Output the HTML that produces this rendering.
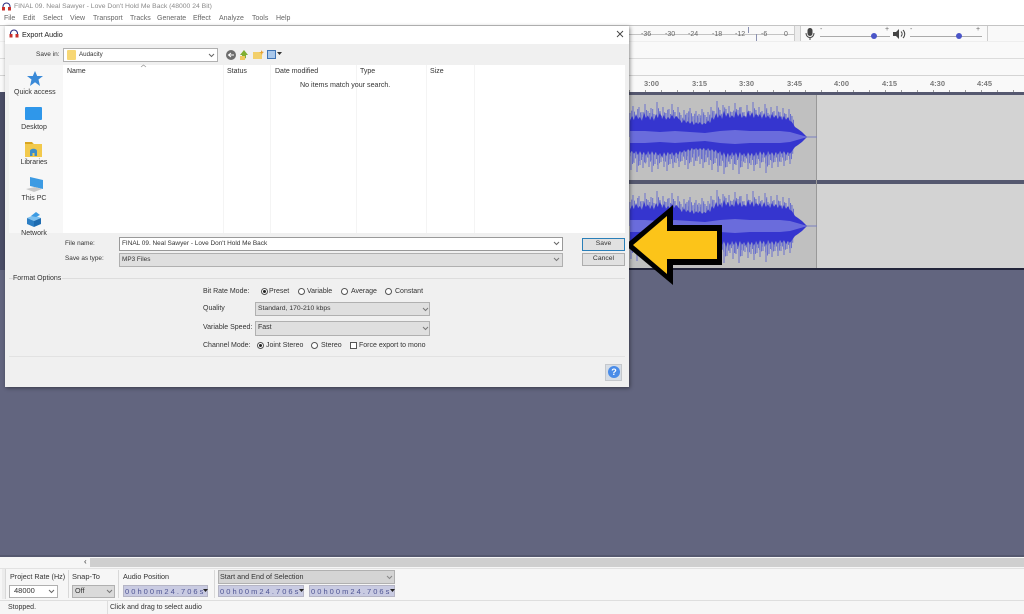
<!DOCTYPE html>
<html><head><meta charset="utf-8"><style>
html,body{margin:0;padding:0;background:#fff}
#r{position:relative;width:1024px;height:614px;overflow:hidden;background:#62657f;font-family:"Liberation Sans",sans-serif;font-size:7px;color:#333;filter:blur(.35px)}
#r div,#r svg{position:absolute}
.t{white-space:nowrap;line-height:10px}
.sel{border:1px solid #b0b0b0;box-sizing:border-box;background:#dfdfdf}
.tm{font-size:7.500px;letter-spacing:2.050px;background:#c9cbe2;color:#4f5594;height:12px;line-height:12px;white-space:nowrap;border:1px solid #b5b5c5;box-sizing:border-box;padding-left:1px}
.rad{width:7px;height:7px;border:1px solid #555;border-radius:50%;box-sizing:border-box;background:#fff}
.on:after{content:"";position:absolute;left:1px;top:1px;width:3px;height:3px;border-radius:50%;background:#222}
.rl{font-size:7.500px;color:#444;white-space:nowrap;line-height:10px;font-weight:bold;opacity:.7}
.db{font-size:7px;color:#666;white-space:nowrap;line-height:9px}
</style></head><body><div id="r">
<!-- title & menu -->
<div style="left:0;top:0;width:1024px;height:25px;background:#fff"></div>
<svg style="left:2px;top:2px" width="9" height="9" viewBox="0 0 9 9"><path d="M1 6V4.500a3.500 3.500 0 0 1 7 0V6" fill="none" stroke="#2b2b80" stroke-width="1"/><rect x="0" y="5" width="3" height="3.500" fill="#c9302c"/><rect x="6" y="5" width="3" height="3.500" fill="#c9302c"/></svg>
<div class="t" style="left:14px;top:2px;color:#8a8a8a;font-size:6.800px">FINAL 09. Neal Sawyer - Love Don't Hold Me Back (48000 24 Bit)</div>
<div class="t" style="left:4px;top:14px;color:#666">File</div>
<div class="t" style="left:23px;top:14px;color:#666">Edit</div>
<div class="t" style="left:43px;top:14px;color:#666">Select</div>
<div class="t" style="left:70px;top:14px;color:#666">View</div>
<div class="t" style="left:93px;top:14px;color:#666">Transport</div>
<div class="t" style="left:130px;top:14px;color:#666">Tracks</div>
<div class="t" style="left:157px;top:14px;color:#666">Generate</div>
<div class="t" style="left:193px;top:14px;color:#666">Effect</div>
<div class="t" style="left:219px;top:14px;color:#666">Analyze</div>
<div class="t" style="left:252px;top:14px;color:#666">Tools</div>
<div class="t" style="left:276px;top:14px;color:#666">Help</div>
<!-- toolbars -->
<div style="left:0;top:25px;width:1024px;height:67px;background:#f9f9f9"></div>
<div style="left:0;top:25px;width:1024px;height:1px;background:#c4c4c4"></div>
<div style="left:0;top:41px;width:1024px;height:1px;background:#eeeeee"></div>
<div style="left:0;top:58px;width:1024px;height:1px;background:#dcdcdc"></div>
<div style="left:0;top:75px;width:1024px;height:1px;background:#d4d4d4"></div>
<!-- meter -->
<div style="left:629px;top:34px;width:170px;height:1px;background:#c4c4c4"></div>
<div class="db" style="left:641px;top:30px">-36</div><div class="db" style="left:665px;top:30px">-30</div><div class="db" style="left:688px;top:30px">-24</div><div class="db" style="left:712px;top:30px">-18</div><div class="db" style="left:735px;top:30px">-12</div><div class="db" style="left:761px;top:30px">-6</div><div class="db" style="left:784px;top:30px">0</div>
<div style="left:748px;top:27px;width:1px;height:6px;background:#8a90b0"></div>
<div style="left:756px;top:34px;width:1px;height:7px;background:#8a90b0"></div>
<div style="left:794px;top:26px;width:7px;height:15px;background:#ececec;border-left:1px solid #ccc;border-right:1px solid #ccc;box-sizing:border-box"></div>
<svg style="left:803px;top:27px" width="14" height="14" viewBox="0 0 14 14"><rect x="4.500" y="1" width="5" height="8" rx="2.500" fill="#444"/><path d="M3 6c0 6 8 6 8 0M7 10v3" fill="none" stroke="#444"/></svg>
<div style="left:820px;top:36px;width:70px;height:1px;background:#aaa"></div>
<div style="left:871px;top:33px;width:6px;height:6px;border-radius:50%;background:#4a55c8"></div>
<div class="db" style="left:820px;top:25px">-</div><div class="db" style="left:885px;top:25px">+</div>
<svg style="left:893px;top:28px" width="13" height="12" viewBox="0 0 13 12"><path d="M0 4h3l3-3v10L3 8H0z" fill="#444"/><path d="M8 3.500c1.500 1.500 1.500 3.500 0 5M10 2c2.300 2.300 2.300 5.700 0 8" fill="none" stroke="#444"/></svg>
<div style="left:910px;top:36px;width:72px;height:1px;background:#aaa"></div>
<div style="left:956px;top:33px;width:6px;height:6px;border-radius:50%;background:#4a55c8"></div>
<div class="db" style="left:910px;top:25px">-</div><div class="db" style="left:976px;top:25px">+</div>
<div style="left:987px;top:26px;width:1px;height:15px;background:#ccc"></div>
<!-- ruler -->
<div class="rl" style="left:644px;top:79px">3:00</div><div class="rl" style="left:692px;top:79px">3:15</div><div class="rl" style="left:739px;top:79px">3:30</div><div class="rl" style="left:787px;top:79px">3:45</div><div class="rl" style="left:834px;top:79px">4:00</div><div class="rl" style="left:882px;top:79px">4:15</div><div class="rl" style="left:930px;top:79px">4:30</div><div class="rl" style="left:977px;top:79px">4:45</div>
<div style="left:629px;top:90px;width:395px;height:2px;background:repeating-linear-gradient(90deg,#999 0,#999 1px,transparent 1px,transparent 16px)"></div>
<div style="left:0;top:92px;width:1024px;height:3px;background:#55586f"></div>
<!-- tracks -->
<div style="left:0;top:95px;width:1024px;height:85px;background:#d3d3d3"></div>
<div style="left:0;top:95px;width:817px;height:85px;background:#c0c0c0"></div>
<div style="left:0;top:180px;width:1024px;height:4px;background:#55586f"></div>
<div style="left:0;top:184px;width:1024px;height:84px;background:#d3d3d3"></div>
<div style="left:0;top:184px;width:817px;height:84px;background:#c0c0c0"></div>
<div style="left:0;top:268px;width:1024px;height:2px;background:#22243a"></div>
<div style="left:816px;top:95px;width:1px;height:173px;background:#999"></div>
<div style="left:0;top:92px;width:5px;height:178px;background:#4a4d66"></div>
<!-- waveforms -->
<svg style="left:0;top:0" width="1024" height="280" viewBox="0 0 1024 280">
<defs>
<path id="s" d="M630 0V-24M633 0V-31M636 0V-22M639 0V-30M642 0V-25M645 0V-33M648 0V-26M651 0V-29M654 0V-23M657 0V-35M660 0V-26M663 0V-30M666 0V-24M669 0V-28M672 0V-33M675 0V-25M678 0V-30M681 0V-22M684 0V-27M687 0V-24M690 0V-29M693 0V-21M696 0V-26M699 0V-23M702 0V-28M705 0V-22M708 0V-25M711 0V-30M714 0V-26M717 0V-36M720 0V-27M723 0V-32M726 0V-28M729 0V-31M732 0V-25M735 0V-34M738 0V-27M741 0V-30M744 0V-25M747 0V-32M750 0V-26M753 0V-35M756 0V-27M759 0V-30M762 0V-26M765 0V-33M768 0V-24M771 0V-30M774 0V-26M777 0V-31M780 0V-25M783 0V-29M786 0V-23M789 0V-28M792 0V-21M631 0V33M634 0V26M637 0V35M640 0V28M643 0V31M646 0V25M649 0V30M652 0V35M655 0V27M658 0V32M661 0V25M664 0V30M667 0V34M670 0V27M673 0V31M676 0V26M679 0V30M682 0V24M685 0V28M688 0V32M691 0V25M694 0V29M697 0V24M700 0V27M703 0V31M706 0V25M709 0V28M712 0V33M715 0V26M718 0V35M721 0V29M724 0V37M727 0V30M730 0V27M733 0V33M736 0V28M739 0V37M742 0V30M745 0V26M748 0V32M751 0V28M754 0V34M757 0V27M760 0V31M763 0V25M766 0V36M769 0V28M772 0V31M775 0V25M778 0V30M781 0V25M784 0V29M787 0V23M790 0V27" stroke="#6a70cc" stroke-width="1" fill="none"/>
<g id="w">
<use href="#s"/>
<use href="#s" transform="translate(1.500,0) scale(1,.82)"/>
<use href="#s" transform="translate(.7,0) scale(1,-.8)"/>
<path d="M630-16L632-21 634-17 636-23 638-18 640-20 642-16 644-24 646-19 648-22 650-17 652-21 654-16 656-23 658-19 660-25 662-18 664-22 666-17 668-20 670-18 672-23 674-18 676-21 678-19 680-17 682-14 684-18 686-14 688-16 690-13 692-16 694-12 696-15 698-13 700-15 702-12 704-14 706-13 708-17 710-14 712-20 714-17 716-24 718-19 720-23 722-18 724-26 726-20 728-24 730-19 732-22 734-19 736-26 738-20 740-24 742-19 744-22 746-19 748-26 750-20 752-25 754-19 756-24 758-20 760-23 762-18 764-24 766-19 768-22 770-18 772-23 774-19 776-22 778-18 780-22 782-17 784-21 786-17 788-20 790-16 792-15 795-10 798-8 802-5 806-1 808 0 806 1 802 5 798 8 795 10 792 14 790 17 788 15 786 18 784 14 782 17 780 14 778 18 776 15 774 19 772 15 770 18 768 14 766 20 764 15 762 18 760 14 758 19 756 15 754 20 752 16 750 19 748 15 746 20 744 16 742 19 740 15 738 21 736 15 734 19 732 15 730 20 728 16 726 21 724 15 722 19 720 14 718 17 716 13 714 15 712 12 710 14 708 11 706 14 704 11 702 13 700 11 698 13 696 11 694 13 692 11 690 14 688 12 686 15 684 13 682 16 680 14 678 18 676 15 674 19 672 15 670 18 668 15 666 19 664 15 662 20 660 16 658 19 656 15 654 18 652 14 650 18 648 14 646 19 644 15 642 18 640 14 638 18 636 14 634 17 632 14 630 16Z" fill="#3535cf"/>
<path d="M630-6L645-6 660-5 675-6 690-5 705-4 720-6 735-7 750-6 765-6 780-6 790-5 797-3 804-1 808 0 804 1 797 3 790 5 780 6 765 6 750 6 735 7 720 6 705 4 690 5 675 6 660 5 645 6 630 6Z" fill="#6a6cdc"/>
<path d="M805 0H817" stroke="#7a7fc0" stroke-width="1"/>
</g></defs>
<use href="#w" transform="translate(0,137)"/>
<use href="#w" transform="translate(0,226)"/>
</svg>
<!-- arrow -->
<svg style="left:0;top:0" width="1024" height="300" viewBox="0 0 1024 300"><polygon points="625,245 673,205 673,225 722,225 722,265 673,265 673,285" fill="#000"/><polygon points="633,245 667,216 667,231 717,231 717,259 667,259 667,274" fill="#fcc419"/></svg>
<!-- dialog -->
<div style="left:5px;top:26px;width:624px;height:361px;background:#f0f0f0;box-shadow:1px 1px 4px rgba(0,0,0,.45)"></div>
<div style="left:5px;top:26px;width:624px;height:18px;background:#fff"></div>
<svg style="left:9px;top:29px" width="10" height="9" viewBox="0 0 10 9"><path d="M1.500 6V4.500a3.500 3.500 0 0 1 7 0V6" fill="none" stroke="#2b2b80" stroke-width="1.100"/><rect x="0.500" y="5" width="3" height="3.500" fill="#c9302c"/><rect x="6.500" y="5" width="3" height="3.500" fill="#c9302c"/></svg>
<div class="t" style="left:22px;top:30px;font-size:7.200px;color:#222">Export Audio</div>
<svg style="left:616px;top:30px" width="8" height="8" viewBox="0 0 8 8"><path d="M1 1l6 6M7 1L1 7" stroke="#444" stroke-width=".9"/></svg>
<div class="t" style="left:36px;top:50px;font-size:6.500px">Save in:</div>
<div class="sel" style="left:63px;top:48px;width:155px;height:14px;background:#fff"></div>
<div style="left:67px;top:50px;width:9px;height:10px;background:#f7d774;border-radius:1px"></div>
<div class="t" style="left:79px;top:50px;font-size:6.200px">Audacity</div>
<svg style="left:208px;top:53px" width="7" height="5" viewBox="0 0 7 5"><path d="M1 1l2.500 2.500L6 1" fill="none" stroke="#666"/></svg>
<div style="left:226px;top:50px;width:10px;height:10px;border-radius:50%;background:#6d6d6d"></div>
<svg style="left:227px;top:52px" width="8" height="6" viewBox="0 0 8 6"><path d="M7 3H2M4 1L1.500 3 4 5" fill="none" stroke="#fff"/></svg>
<svg style="left:239px;top:49px" width="10" height="11" viewBox="0 0 10 11"><path d="M3 11V6H1l4-5 4 5H7v3" fill="#7fae32"/><rect x="1" y="7" width="5" height="4" fill="#f0c860"/></svg>
<svg style="left:253px;top:50px" width="11" height="10" viewBox="0 0 11 10"><rect x="0" y="2" width="9" height="7" fill="#f2cf6a"/><path d="M8 0l1 1.500L11 2 9.500 3 9 5 8 3 6 2.500 8 2z" fill="#e8a030"/></svg>
<div style="left:267px;top:50px;width:9px;height:9px;background:#a9c7ea;border:1px solid #3f74b5;box-sizing:border-box"></div>
<svg style="left:277px;top:52px" width="5" height="4" viewBox="0 0 5 4"><path d="M0 0h5L2.500 3z" fill="#333"/></svg>
<!-- nav pane -->
<div style="left:9px;top:65px;width:54px;height:168px;background:#f7f7f7"></div>
<svg style="left:27px;top:71px" width="16" height="15" viewBox="0 0 16 15"><path d="M8 0l2.200 5H16l-4.500 3.500L13 15 8 11.300 3 15l1.500-6.500L0 5h5.800z" fill="#3a8ad8"/></svg>
<div class="t" style="left:14px;top:88px;width:40px;text-align:center">Quick access</div>
<div style="left:25px;top:107px;width:17px;height:13px;background:#2f97ea;border-radius:1px"></div>
<div class="t" style="left:14px;top:123px;width:40px;text-align:center">Desktop</div>
<svg style="left:25px;top:141px" width="17" height="16" viewBox="0 0 17 16"><path d="M0 1h7l2 2h8v13H0z" fill="#f2c94c"/><path d="M0 1h7l1 2H0z" fill="#d9a520"/><path d="M5 15V10c0-3 7-3 7 0v5H9.500v-3h-2v3z" fill="#3d8ec9"/></svg>
<div class="t" style="left:14px;top:158px;width:40px;text-align:center">Libraries</div>
<svg style="left:25px;top:176px" width="19" height="17" viewBox="0 0 19 17"><path d="M5 1l13 3v9L5 10z" fill="#3d9be3"/><path d="M1 13l9-2 7 2-8 3z" fill="#c8c8c8"/></svg>
<div class="t" style="left:14px;top:194px;width:40px;text-align:center">This PC</div>
<svg style="left:25px;top:211px" width="18" height="17" viewBox="0 0 18 17"><path d="M2 7l7-3 7 3-7 3z" fill="#7cc0f0"/><path d="M2 7v6l7 3v-6z" fill="#2d7fc4"/><path d="M16 7v6l-7 3v-6z" fill="#1f6cb0"/><path d="M6 5l5-4 4 3-4 2z" fill="#3d9be3"/></svg>
<div class="t" style="left:14px;top:229px;width:40px;text-align:center">Network</div>
<!-- list -->
<div style="left:63px;top:65px;width:562px;height:168px;background:#fff"></div>
<div class="t" style="left:67px;top:67px">Name</div>
<svg style="left:140px;top:64px" width="7" height="4" viewBox="0 0 7 4"><path d="M1 3l2.500-2L6 3" fill="none" stroke="#999" stroke-width=".8"/></svg>
<div class="t" style="left:227px;top:67px">Status</div>
<div class="t" style="left:275px;top:67px">Date modified</div>
<div class="t" style="left:360px;top:67px">Type</div>
<div class="t" style="left:430px;top:67px">Size</div>
<div style="left:223px;top:65px;width:1px;height:168px;background:#f4f4f4"></div>
<div style="left:270px;top:65px;width:1px;height:168px;background:#f4f4f4"></div>
<div style="left:356px;top:65px;width:1px;height:168px;background:#f4f4f4"></div>
<div style="left:426px;top:65px;width:1px;height:168px;background:#f4f4f4"></div>
<div style="left:474px;top:65px;width:1px;height:168px;background:#f4f4f4"></div>
<div class="t" style="left:300px;top:80px;font-size:7.100px">No items match your search.</div>
<!-- file name -->
<div class="t" style="left:65px;top:239px;font-size:6.400px">File name:</div>
<div class="sel" style="left:119px;top:237px;width:444px;height:14px;background:#fff;border-color:#999"></div>
<div class="t" style="left:122px;top:239px;font-size:6.450px">FINAL 09. Neal Sawyer - Love Don't Hold Me Back</div>
<svg style="left:553px;top:241px" width="7" height="5" viewBox="0 0 7 5"><path d="M1 1l2.500 2.500L6 1" fill="none" stroke="#666"/></svg>
<div class="t" style="left:65px;top:254px;font-size:6.400px">Save as type:</div>
<div class="sel" style="left:119px;top:253px;width:444px;height:14px"></div>
<div class="t" style="left:122px;top:255px;font-size:6.400px">MP3 Files</div>
<svg style="left:553px;top:257px" width="7" height="5" viewBox="0 0 7 5"><path d="M1 1l2.500 2.500L6 1" fill="none" stroke="#777"/></svg>
<div style="left:582px;top:238px;width:43px;height:13px;background:#e1e1e1;border:1px solid #2a7fb8;box-sizing:border-box"></div>
<div class="t" style="left:582px;top:239px;width:43px;text-align:center;font-size:6.800px">Save</div>
<div style="left:582px;top:253px;width:43px;height:13px;background:#e1e1e1;border:1px solid #adadad;box-sizing:border-box"></div>
<div class="t" style="left:582px;top:254px;width:43px;text-align:center;font-size:6.800px">Cancel</div>
<!-- format options -->
<div style="left:9px;top:278px;width:616px;height:79px;border-top:1px solid #ddd;border-bottom:1px solid #e2e2e2;box-sizing:border-box"></div>
<div class="t" style="left:13px;top:274px;background:#f0f0f0;padding-right:1px">Format Options</div>
<div class="t" style="left:203px;top:287px">Bit Rate Mode:</div>
<div class="rad on" style="left:261px;top:288px"></div><div class="t" style="left:269px;top:287px">Preset</div>
<div class="rad" style="left:298px;top:288px"></div><div class="t" style="left:307px;top:287px">Variable</div>
<div class="rad" style="left:341px;top:288px"></div><div class="t" style="left:351px;top:287px">Average</div>
<div class="rad" style="left:385px;top:288px"></div><div class="t" style="left:395px;top:287px">Constant</div>
<div class="t" style="left:203px;top:304px">Quality</div>
<div class="sel" style="left:255px;top:302px;width:175px;height:14px"></div>
<div class="t" style="left:258px;top:304px;font-size:6.800px">Standard, 170-210 kbps</div>
<svg style="left:422px;top:307px" width="7" height="5" viewBox="0 0 7 5"><path d="M1 1l2.500 2.500L6 1" fill="none" stroke="#777"/></svg>
<div class="t" style="left:203px;top:323px">Variable Speed:</div>
<div class="sel" style="left:255px;top:321px;width:175px;height:15px"></div>
<div class="t" style="left:258px;top:323px">Fast</div>
<svg style="left:422px;top:326px" width="7" height="5" viewBox="0 0 7 5"><path d="M1 1l2.500 2.500L6 1" fill="none" stroke="#777"/></svg>
<div class="t" style="left:203px;top:341px">Channel Mode:</div>
<div class="rad on" style="left:257px;top:342px"></div><div class="t" style="left:266px;top:341px">Joint Stereo</div>
<div class="rad" style="left:311px;top:342px"></div><div class="t" style="left:321px;top:341px">Stereo</div>
<div style="left:350px;top:342px;width:7px;height:7px;border:1px solid #555;box-sizing:border-box;background:#fff"></div><div class="t" style="left:359px;top:341px">Force export to mono</div>
<div style="left:605px;top:364px;width:17px;height:17px;background:#d6dde6;border:1px solid #c5c8cc;box-sizing:border-box"></div>
<div style="left:608px;top:366px;width:12px;height:12px;border-radius:50%;background:#4a8ce8"></div>
<div class="t" style="left:608px;top:367px;width:12px;text-align:center;color:#fff;font-weight:bold;font-size:9px">?</div>
<!-- bottom -->
<div style="left:0;top:555px;width:1024px;height:2px;background:#55586f"></div>
<div style="left:0;top:557px;width:1024px;height:59px;background:#f6f6f6"></div>
<div style="left:90px;top:558px;width:934px;height:9px;background:#cfcfcf"></div>
<div class="t" style="left:84px;top:557px;font-size:8px">‹</div>
<div style="left:0;top:568px;width:1024px;height:1px;background:#e2e2e2"></div>
<div style="left:2px;top:569px;width:3px;height:30px;background:#ececec;border-right:1px solid #d8d8d8"></div>
<div class="t" style="left:10px;top:572px;font-size:7.200px">Project Rate (Hz)</div>
<div class="t" style="left:72px;top:572px;font-size:7.500px">Snap-To</div>
<div class="t" style="left:123px;top:572px;font-size:7.200px">Audio Position</div>
<div style="left:68px;top:570px;width:1px;height:28px;background:#d8d8d8"></div>
<div style="left:118px;top:570px;width:1px;height:28px;background:#d8d8d8"></div>
<div style="left:214px;top:570px;width:1px;height:28px;background:#d8d8d8"></div>
<div class="sel" style="left:218px;top:570px;width:177px;height:14px;background:#d4d4d4"></div>
<div class="t" style="left:220px;top:572px;font-size:7.200px">Start and End of Selection</div>
<svg style="left:386px;top:575px" width="7" height="5" viewBox="0 0 7 5"><path d="M1 1l2.500 2.500L6 1" fill="none" stroke="#888"/></svg>
<div class="sel" style="left:9px;top:585px;width:49px;height:13px;background:#fff"></div>
<div class="t" style="left:14px;top:586px;font-size:7.500px">48000</div>
<svg style="left:48px;top:589px" width="7" height="5" viewBox="0 0 7 5"><path d="M1 1l2.500 2.500L6 1" fill="none" stroke="#666"/></svg>
<div class="sel" style="left:72px;top:585px;width:43px;height:13px;background:#dadada"></div>
<div class="t" style="left:75px;top:586px;font-size:7.200px">Off</div>
<svg style="left:106px;top:589px" width="7" height="5" viewBox="0 0 7 5"><path d="M1 1l2.500 2.500L6 1" fill="none" stroke="#777"/></svg>
<div class="tm" style="left:123px;top:585px;width:85px">00h00m24.706s</div>
<div class="tm" style="left:218px;top:585px;width:86px">00h00m24.706s</div>
<div class="tm" style="left:309px;top:585px;width:86px">00h00m24.706s</div>
<svg style="left:203px;top:589px" width="5" height="4" viewBox="0 0 5 4"><path d="M0 0h5L2.500 3z" fill="#222"/></svg>
<svg style="left:299px;top:589px" width="5" height="4" viewBox="0 0 5 4"><path d="M0 0h5L2.500 3z" fill="#222"/></svg>
<svg style="left:390px;top:589px" width="5" height="4" viewBox="0 0 5 4"><path d="M0 0h5L2.500 3z" fill="#222"/></svg>
<div style="left:0;top:600px;width:1024px;height:1px;background:#dedede"></div>
<div style="left:107px;top:601px;width:1px;height:13px;background:#dedede"></div>
<div class="t" style="left:8px;top:603px">Stopped.</div>
<div class="t" style="left:110px;top:603px">Click and drag to select audio</div>
</div></body></html>
